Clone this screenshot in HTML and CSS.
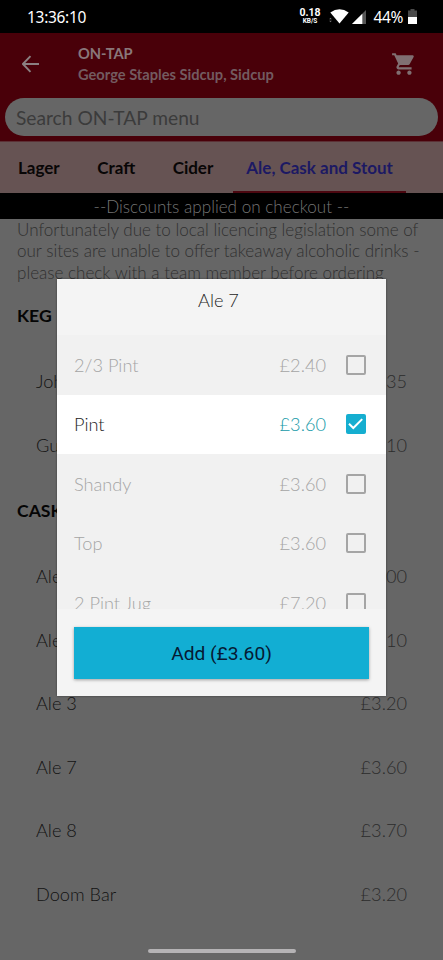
FILE: index.html
```html
<!DOCTYPE html>
<html lang="en">
<head>
<meta charset="utf-8">
<title>ON-TAP</title>
<link rel="stylesheet" href="styles.css">
</head>
<body>
<div class="screen">
  <div class="status">
    <span class="clock">13:36:10</span>
    <div class="status-right">
      <div class="speed"><b>0.18</b><small>KB/S</small></div>
      <svg class="wifi" width="20" height="15" viewBox="0 0 20 15"><path d="M1.3 3.6Q10.5-3 19.7 3.6L10.5 14.5z" fill="#fff"/><path d="M.2 10.2 1.5 8.7l1.3 1.5zM.2 11.8l1.3 1.5 1.3-1.5z" fill="#777"/></svg>
      <svg class="signal" width="14" height="14" viewBox="0 0 14 14"><path d="M14 0v14H0z" fill="#555"/><path d="M10.300 3.700V14H0z" fill="#fff"/></svg>
      <span class="percent">44%</span>
      <svg class="battery" width="9" height="15" viewBox="0 0 9 15"><path d="M2.500 0h4v1.500H9V8H0V1.500h2.500z" fill="#4a4a4a"/><path d="M0 8h9v7H0z" fill="#fff"/></svg>
    </div>
  </div>
  <header class="header">
    <div class="bar">
      <svg class="back" width="18" height="18" viewBox="0 0 18 18"><path d="M17 9H1.500M8.500 1.200.9 9l7.600 7.800" fill="none" stroke="#8b7f81" stroke-width="1.900"/></svg>
      <div class="titles"><div class="title">ON-TAP</div><div class="venue">George Staples Sidcup, Sidcup</div></div>
      <svg class="cart" width="26" height="26" viewBox="0 0 24 24"><path fill="#806f72" d="M7 18c-1.100 0-1.990.9-1.990 2S5.900 22 7 22s2-.9 2-2-.9-2-2-2zM1 2v2h2l3.600 7.590-1.350 2.450c-.16.280-.25.610-.25.960 0 1.100.9 2 2 2h12v-2H7.420c-.14 0-.25-.11-.25-.25l.03-.12.9-1.630h7.450c.75 0 1.410-.41 1.750-1.030l3.580-6.490A1 1 0 0 0 20.010 4H5.210l-.94-2H1zm16 16c-1.100 0-1.990.9-1.990 2s.89 2 1.990 2 2-.9 2-2-.9-2-2-2z"/></svg>
    </div>
    <div class="search">Search ON-TAP menu</div>
  </header>
  <nav class="tabs">
    <span class="tab">Lager</span><span class="tab">Craft</span><span class="tab cider">Cider</span><span class="tab active">Ale, Cask and Stout</span>
  </nav>
  <div class="banner">--Discounts applied on checkout --</div>
  <main class="menu">
    <p class="notice"><span>Unfortunately due to local licencing legislation some of</span><br><span>our sites are unable to offer takeaway alcoholic drinks -</span><br><span>please check with a team member before ordering</span></p>
    <h2>KEG</h2>
    <div class="item"><span>John Smith's</span><span class="price">£3.35</span></div>
    <div class="item"><span>Guinness</span><span class="price">£4.10</span></div>
    <h2>CASK</h2>
    <div class="item"><span>Ale 1</span><span class="price">£3.00</span></div>
    <div class="item"><span>Ale 2</span><span class="price">£3.10</span></div>
    <div class="item"><span>Ale 3</span><span class="price">£3.20</span></div>
    <div class="item"><span>Ale 7</span><span class="price">£3.60</span></div>
    <div class="item"><span>Ale 8</span><span class="price">£3.70</span></div>
    <div class="item"><span>Doom Bar</span><span class="price">£3.20</span></div>
  </main>
  <div class="home"></div>
  <section class="dialog">
    <div class="dialog-title">Ale 7</div>
    <div class="options">
      <div class="option"><span>2/3 Pint</span><span class="cost">£2.40</span><i class="box"></i></div>
      <div class="option chosen"><span>Pint</span><span class="cost">£3.60</span><i class="box"><svg width="19" height="19" viewBox="0 0 19 19"><path d="M3 9.700 7.300 14 16.200 5.100" fill="none" stroke="#fff" stroke-width="2"/></svg></i></div>
      <div class="option"><span>Shandy</span><span class="cost">£3.60</span><i class="box"></i></div>
      <div class="option"><span>Top</span><span class="cost">£3.60</span><i class="box"></i></div>
      <div class="option"><span>2 Pint Jug</span><span class="cost">£7.20</span><i class="box"></i></div>
    </div>
    <div class="add">Add (£3.60)</div>
  </section>
</div>
</body>
</html>
```
FILE: styles.css
```css
* { box-sizing: border-box; }
body { margin: 0; background: #666; }
.screen { position: relative; width: 443px; height: 960px; overflow: hidden; background: #666; font-family: Lato, sans-serif; font-weight: 300; font-size: 18.200px; color: #121212; white-space: nowrap; }
.status { height: 33px; background: #000; color: #fff; display: flex; justify-content: space-between; align-items: center; padding: 0 26px 0 27px; font-family: "Noto Sans", sans-serif; font-weight: 400; font-size: 15.500px; }
.clock { letter-spacing: -.3px; }
.status-right { display: flex; align-items: center; }
.speed { display: flex; flex-direction: column; align-items: center; font-family: Roboto, sans-serif; margin-right: 8px; }
.speed b { font-size: 10.500px; font-weight: 700; line-height: 10px; }
.speed small { font-size: 6.500px; font-weight: 700; line-height: 7px; }
.signal { margin: 0 8px 0 3px; }
.percent { margin-right: 5px; letter-spacing: -.4px; }
.header { height: 108px; background: #490009; }
.bar { height: 65px; display: flex; align-items: center; padding: 0 26px 4px 22px; }
.titles { flex: 1; margin-left: 38px; font-weight: 700; font-size: 14.650px; line-height: 21px; color: #89777a; }
.venue { color: #735b60; }
.search { height: 38px; margin: 0 5px; padding-left: 11px; border-radius: 19px; background: #666; color: #3b3b3b; font-weight: 400; line-height: 39px; font-size: 19.200px; }
.tabs { height: 52px; background: #665353; display: flex; padding: 0 36px 0 5px; border-top: 1px solid #5c3035; font-size: 17px; font-weight: 700; color: #080606; line-height: 52px; }
.tab { padding: 0 13px; margin-right: 11.500px; }
.tab.cider { margin-right: 7px; }
.tab.active { color: #1c1963; border-bottom: 2px solid #4c0710; margin: 0; }
.banner { height: 26px; background: #000; color: #747474; text-align: center; line-height: 28px; font-size: 17.100px; }
.menu { padding: 0 36px; }
.notice { margin: 0 -19px; height: 63px; line-height: 21.300px; font-size: 17.050px; color: #303030; }
h2 { margin: 0 -19px; height: 68px; line-height: 68px; font-size: 17.600px; font-weight: 700; color: #050505; }
.item { height: 63.500px; padding-bottom: 1px; display: flex; justify-content: space-between; align-items: center; }
.price { color: #2c2c2c; }
.home { position: absolute; left: 148px; top: 949px; width: 148px; height: 4px; border-radius: 2px; background: #b5b3b5; }
.dialog { position: absolute; left: 57px; top: 279px; width: 329px; height: 417px; background: #f4f4f4; box-shadow: 0 0 2px rgba(0,0,0,.45); }
.dialog-title { height: 56px; line-height: 43px; padding-right: 6px; text-align: center; color: #1c1c1c; }
.options { height: 274px; overflow: hidden; }
.option { height: 59.500px; display: flex; align-items: center; padding: 0 20px 0 17px; background: #f1f1f1; color: #a5a5a5; }
.cost { margin-left: auto; }
.box { width: 20px; height: 20px; margin-left: 20px; border: 2px solid #a5a5a5; border-radius: 2px; }
.chosen { background: #fff; color: #1c1c1c; }
.chosen .cost { color: #169aa8; }
.chosen .box { border: 0; background: #15aed0; }
.box svg { display: block; }
.add { height: 52px; margin: 18px 17px 0; background: #12aed3; color: #061a33; font: 400 19.200px/53px Roboto, sans-serif; text-align: center; box-shadow: 0 1px 3px rgba(0,0,0,.35); }
```
